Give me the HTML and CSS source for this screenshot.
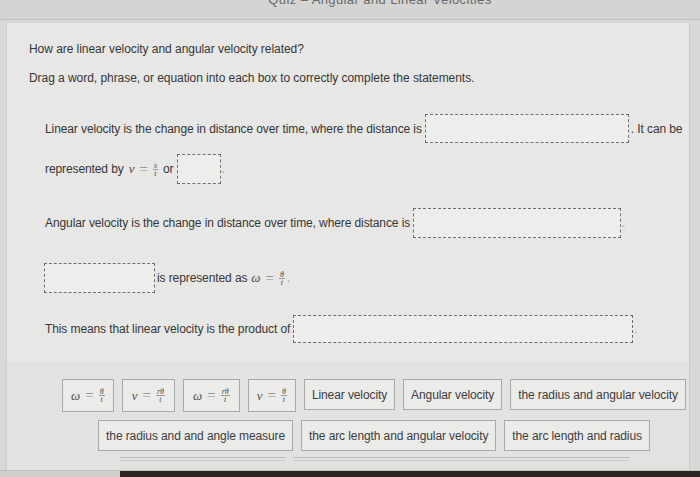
FILE: index.html
```html
<!DOCTYPE html>
<html lang="en">
<head>
<meta charset="utf-8">
<title>Angular and Linear Velocities</title>
<link rel="stylesheet" href="styles.css">
</head>
<body>
<header class="topbar">
  <span class="title">Quiz &ndash; Angular and Linear Velocities</span>
</header>

<main class="panel">
  <p class="prompt q1">How are linear velocity and angular velocity related?</p>
  <p class="prompt q2">Drag a word, phrase, or equation into each box to correctly complete the statements.</p>

  <div class="line l1">
    <span>Linear velocity is the change in distance over time, where the distance is</span>
    <span class="drop d1"></span>
    <span>. It can be</span>
  </div>
  <div class="line l2">
    <span>represented by</span>
    <span class="math"><i>v</i><span class="eq">=</span><span class="frac"><i>s</i><i>t</i></span></span>
    <span>or</span>
    <span class="drop d2"></span>
    <span class="dot">.</span>
  </div>

  <div class="line l3">
    <span>Angular velocity is the change in distance over time, where distance is</span>
    <span class="drop d3"></span>
    <span class="dot">.</span>
  </div>
  <div class="line l4">
    <span class="drop d4"></span>
    <span>is represented as</span>
    <span class="math"><i>&omega;</i><span class="eq">=</span><span class="frac"><i>&theta;</i><i>t</i></span></span>
    <span class="dot">.</span>
  </div>

  <div class="line l5">
    <span>This means that linear velocity is the product of</span>
    <span class="drop d5"></span>
    <span class="dot">.</span>
  </div>

  <section class="bank">
    <div class="chips">
      <span class="chip eqchip"><span class="math"><i>&omega;</i><span class="eq">=</span><span class="frac"><i>&theta;</i><i>t</i></span></span></span>
      <span class="chip eqchip roomy"><span class="math"><i>v</i><span class="eq">=</span><span class="frac"><i>r&theta;</i><i>t</i></span></span></span>
      <span class="chip eqchip roomy"><span class="math"><i>&omega;</i><span class="eq">=</span><span class="frac"><i>r&theta;</i><i>t</i></span></span></span>
      <span class="chip eqchip"><span class="math"><i>v</i><span class="eq">=</span><span class="frac"><i>&theta;</i><i>t</i></span></span></span>
      <span class="chip">Linear velocity</span>
      <span class="chip">Angular velocity</span>
      <span class="chip">the radius and angular velocity</span>
      <span class="chip">the radius and and angle measure</span>
      <span class="chip">the arc length and angular velocity</span>
      <span class="chip">the arc length and radius</span>
    </div>
    <div class="rules">
      <span class="rule r1"></span>
      <span class="rule r2"></span>
    </div>
  </section>
</main>

<footer class="desk">
  <span class="desk-left"></span>
  <span class="desk-dark"></span>
</footer>
</body>
</html>
```

FILE: styles.css
```css
html, body {
  margin: 0;
  padding: 0;
  height: 477px;
  overflow: hidden;
}

body {
  background: #d8d8d6;
  font-family: "Liberation Sans", Arial, sans-serif;
  font-size: 12px;
  color: #363636;
  display: flex;
  flex-direction: column;
}

/* window title strip, scrolled mostly out of view */
.topbar {
  height: 19px;
  border-bottom: 1px solid #bdbdbb;
  background: #d4d4d2;
  display: flex;
  justify-content: center;
  overflow: hidden;
  flex: none;
}

.title {
  margin-top: -8px;
  margin-left: 60px;
  font-size: 13px;
  line-height: 16px;
  color: #6a6a6a;
  letter-spacing: 0.4px;
}

/* question card */
.panel {
  margin: 3px 10px 0 6px;
  padding: 0 0 0 22px;
  background: #e7e7e5;
  border-left: 1px solid #cfcfcd;
  border-right: 1px solid #c9c9c7;
  flex: none;
  height: 447px;
  display: flex;
  flex-direction: column;
}

.prompt {
  margin: 0;
  letter-spacing: -0.05px;
}

.q1 { margin-top: 19px; }
.q2 { margin-top: 15px; }

.line {
  display: flex;
  align-items: center;
  gap: 3px;
  padding-left: 16px;
  white-space: nowrap;
  letter-spacing: -0.1px;
}

.l1 { margin-top: 29px; }
.l2 { margin-top: 11px; }
.l3 { margin-top: 24px; }
.l4 { margin-top: 25px; gap: 2px; }
.l5 { margin-top: 22px; }

.l1 .drop + span { margin-left: -1px; }

/* drop targets */
.drop {
  display: inline-block;
  border: 1px dashed #6f6f6f;
  background: #edEDeb;
  box-sizing: border-box;
  flex: none;
}

.d1 { width: 204px; height: 29px; }
.d2 { width: 44px; height: 30px; }
.d3 { width: 208px; height: 30px; }
.d4 { width: 111px; height: 30px; margin-left: -1px; }
.d5 { width: 340px; height: 28px; }

.dot { color: #9a9a9a; margin-left: -2px; }

/* inline math */
.math {
  display: inline-flex;
  align-items: center;
  font-family: "Liberation Serif", "Times New Roman", serif;
  color: #505050;
  margin: 0 2px;
  letter-spacing: 0;
}

.math i {
  font-style: italic;
  font-size: 13px;
}

.eq {
  margin: 0 5px;
  font-size: 15px;
  color: #8a8a8a;
}

.frac {
  display: inline-flex;
  flex-direction: column;
  align-items: center;
  line-height: 7px;
}

.frac i {
  font-size: 8px;
  padding: 0 1px;
}

.frac i:first-child {
  border-bottom: 1px solid #9a9a9a;
}

/* answer bank */
.bank {
  margin: 19px 0 0 -22px;
  padding: 17px 0 0 52px;
  background: #e2e2e0;
  flex: 1;
  display: flex;
  flex-direction: column;
}

.chips {
  display: flex;
  flex-wrap: wrap;
  justify-content: center;
  gap: 8px 8px;
}

.chip {
  display: inline-flex;
  align-items: center;
  height: 31px;
  box-sizing: border-box;
  padding: 0 7px;
  border: 1px solid #a9a9a7;
  background: #ebebe9;
  color: #3d3d3d;
  white-space: nowrap;
  letter-spacing: -0.1px;
}

.eqchip {
  padding: 0 8px;
  height: 33px;
}

.eqchip.roomy { padding: 0 9px; }

.eqchip .math { margin: 0; }

.rules {
  display: flex;
  gap: 8px;
  margin-top: 6px;
  padding-left: 61px;
}

.rule {
  height: 2px;
  border-top: 1px solid #b8b8b6;
  border-bottom: 1px solid #c8c8c6;
}

.r1 { width: 165px; }
.r2 { width: 337px; }

/* what lies below the screen edge */
.desk {
  display: flex;
  flex: 1;
  border-top: 1px solid #c0c0be;
}

.desk-left {
  width: 120px;
  background: #cfcfcc;
}

.desk-dark {
  flex: 1;
  background: #2b2622;
}
```
